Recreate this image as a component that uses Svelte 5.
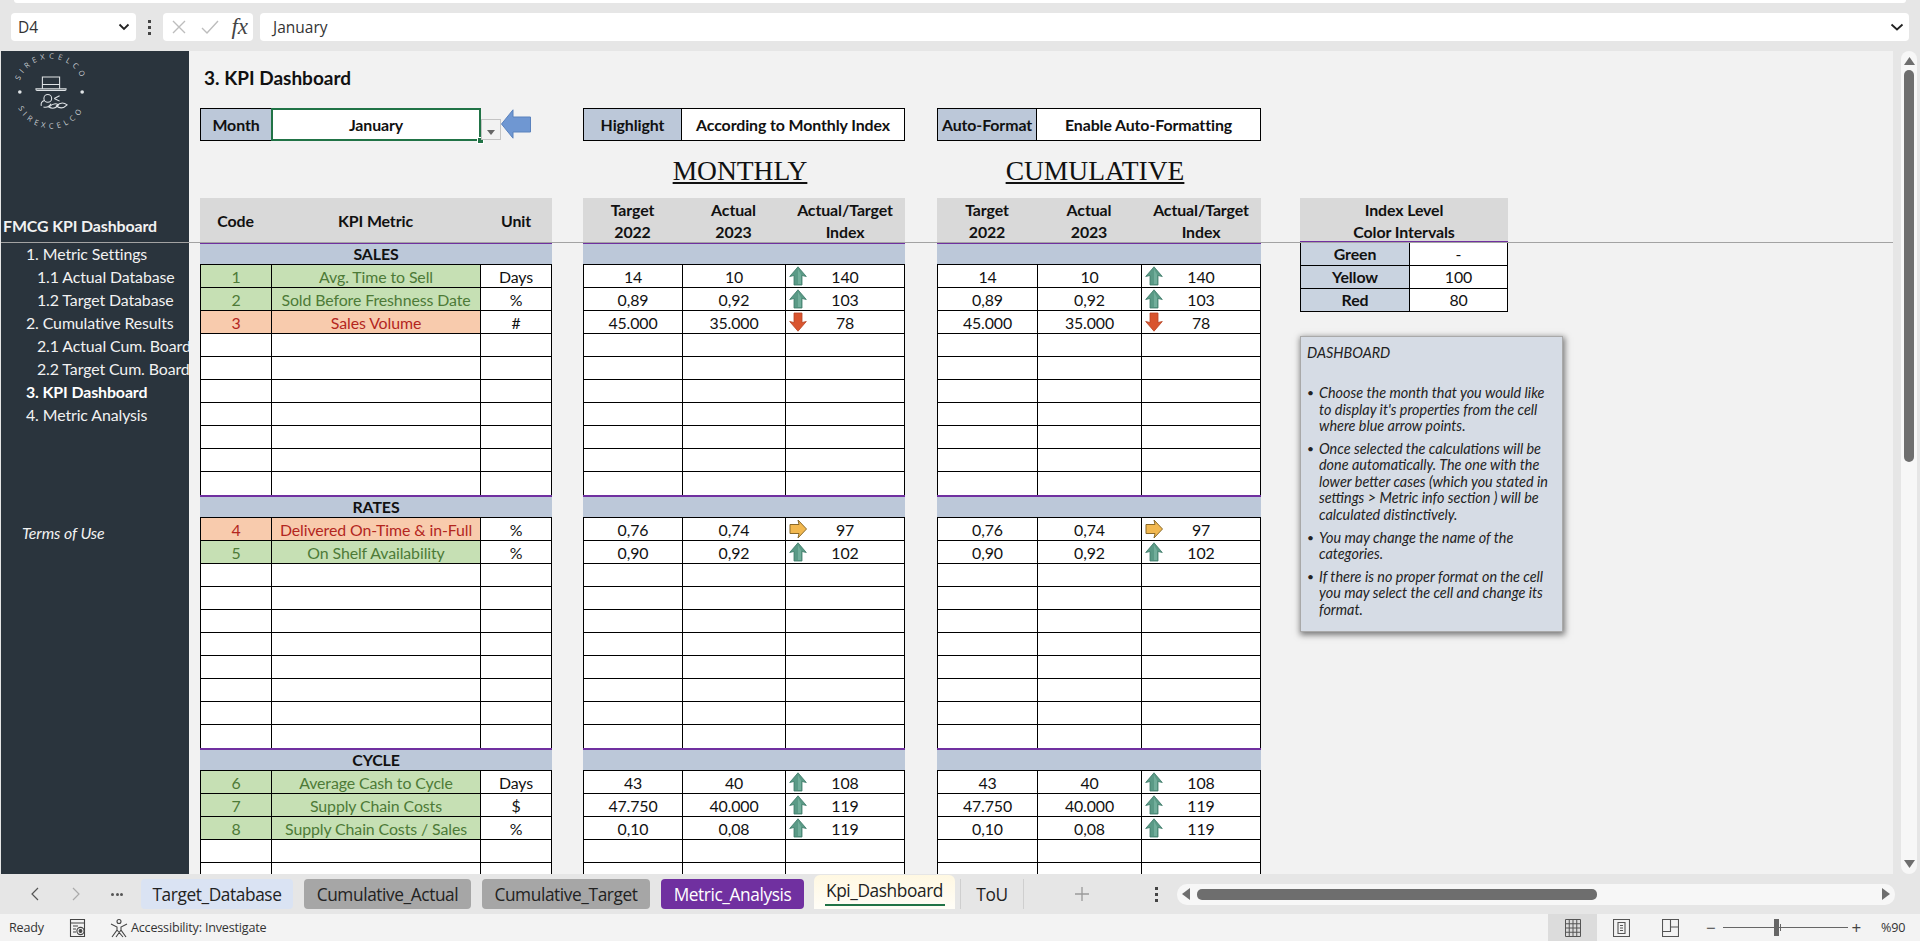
<script>
	const sections = [
		{
			name: 'SALES',
			rows: [
				{ code: 1, metric: 'Avg. Time to Sell', unit: 'Days', target: '14', actual: '10', dir: 'up', index: 140, tone: 'good' },
				{ code: 2, metric: 'Sold Before Freshness Date', unit: '%', target: '0,89', actual: '0,92', dir: 'up', index: 103, tone: 'good' },
				{ code: 3, metric: 'Sales Volume', unit: '#', target: '45.000', actual: '35.000', dir: 'down', index: 78, tone: 'bad' }
			]
		},
		{
			name: 'RATES',
			rows: [
				{ code: 4, metric: 'Delivered On-Time & in-Full', unit: '%', target: '0,76', actual: '0,74', dir: 'side', index: 97, tone: 'bad' },
				{ code: 5, metric: 'On Shelf Availability', unit: '%', target: '0,90', actual: '0,92', dir: 'up', index: 102, tone: 'good' }
			]
		},
		{
			name: 'CYCLE',
			rows: [
				{ code: 6, metric: 'Average Cash to Cycle', unit: 'Days', target: '43', actual: '40', dir: 'up', index: 108, tone: 'good' },
				{ code: 7, metric: 'Supply Chain Costs', unit: '$', target: '47.750', actual: '40.000', dir: 'up', index: 119, tone: 'good' },
				{ code: 8, metric: 'Supply Chain Costs / Sales', unit: '%', target: '0,10', actual: '0,08', dir: 'up', index: 119, tone: 'good' }
			]
		}
	];

	// every section is padded out to ten rows in the sheet
	const filled = sections.map((s) => ({
		name: s.name,
		rows: [...s.rows, ...new Array(10 - s.rows.length).fill(null)]
	}));

	const nav = [
		{ label: '1. Metric Settings', depth: 0 },
		{ label: '1.1 Actual Database', depth: 1 },
		{ label: '1.2 Target Database', depth: 1 },
		{ label: '2. Cumulative Results', depth: 0 },
		{ label: '2.1 Actual Cum. Board', depth: 1 },
		{ label: '2.2 Target Cum. Board', depth: 1 },
		{ label: '3. KPI Dashboard', depth: 0, active: true },
		{ label: '4. Metric Analysis', depth: 0 }
	];

	const tabs = [
		{ label: 'Target_Database', cls: 'blue' },
		{ label: 'Cumulative_Actual', cls: 'grey' },
		{ label: 'Cumulative_Target', cls: 'grey2' },
		{ label: 'Metric_Analysis', cls: 'purple' },
		{ label: 'Kpi_Dashboard', cls: 'current' },
		{ label: 'ToU', cls: 'plain' }
	];

	const notes = [
		["Choose the month that you would like", "to display it's properties from the cell", 'where blue arrow points.'],
		['Once selected the calculations will be', 'done automatically. The one with the', 'lower better cases (which you stated in', 'settings > Metric info section ) will be', 'calculated distinctively.'],
		['You may change the name of the', 'categories.'],
		['If there is no proper format on the cell', 'you may select the cell and change its', 'format.']
	];
</script>

{#snippet arrow(dir)}
	<svg class="arrow" viewBox="0 0 18 20" aria-hidden="true">
		{#if dir === 'up'}
			<path d="M9 .8 L17.3 10.5 L13 9.5 L13 19 L5 19 L5 9.5 L.7 10.5 Z" fill="#5a9a86" stroke="#3d7a68" stroke-width="0.8" />
			<path d="M9 3 L9 18 L12 18 L12 8.5 Z" fill="#72ae9b" />
		{:else if dir === 'down'}
			<path d="M5 1 L13 1 L13 10.5 L17.3 9.5 L9 19.2 L.7 9.5 L5 10.5 Z" fill="#d9552f" stroke="#b84526" stroke-width="0.8" />
		{:else}
			<path d="M1 5.5 L10 5.5 L9 1 L17.5 10 L9 19 L10 14.5 L1 14.5 Z" fill="#f2b84f" stroke="#8a6a2a" stroke-width="1" />
		{/if}
	</svg>
{/snippet}

{#snippet band(name, label)}
	<div class="band">{label ? name : ''}</div>
{/snippet}

<div class="excel">
	<div class="top">
		<div class="ribbon-edge"></div>
		<div class="formula-bar">
			<div class="namebox">
				<span>D4</span>
				<svg width="12" height="8" viewBox="0 0 12 8"><path d="M1.5 1.5 L6 6 L10.5 1.5" fill="none" stroke="#222" stroke-width="1.8" /></svg>
			</div>
			<div class="vdots"><i></i><i></i><i></i></div>
			<div class="fx-box">
				<svg width="18" height="18" viewBox="0 0 18 18"><path d="M3 3 L15 15 M15 3 L3 15" stroke="#bdbdbd" stroke-width="1.4" fill="none" /></svg>
				<svg width="20" height="18" viewBox="0 0 20 18"><path d="M2 10 L7 15 L18 3" stroke="#bdbdbd" stroke-width="1.4" fill="none" /></svg>
				<span class="fx">fx</span>
			</div>
			<div class="formula">
				<span>January</span>
				<svg width="14" height="8" viewBox="0 0 14 8"><path d="M1.5 1.5 L7 6.5 L12.5 1.5" fill="none" stroke="#222" stroke-width="1.8" /></svg>
			</div>
		</div>
	</div>

	<div class="middle">
		<div class="sheet">
			<aside class="side">
				<svg class="logo" viewBox="0 0 80 80" aria-hidden="true">
					<defs>
						<path id="arc-top" d="M9 40 A31 31 0 0 1 71 40" />
						<path id="arc-bottom" d="M6 40 A34 34 0 0 0 74 40" />
					</defs>
					<text class="logo-text"><textPath href="#arc-top" startOffset="50%" text-anchor="middle">SIREXCELCO</textPath></text>
					<text class="logo-text"><textPath href="#arc-bottom" startOffset="50%" text-anchor="middle">SIREXCELCO</textPath></text>
					<circle cx="11" cy="40" r="1.7" fill="#dfe3e6" />
					<circle cx="69" cy="40" r="1.7" fill="#dfe3e6" />
					<g fill="none" stroke="#dfe3e6" stroke-width="1">
						<path d="M26 37 h28 v0.5 a1 1 0 0 1 -1 1 h-26 a1 1 0 0 1 -1 -1 Z" />
						<path d="M32 37 V26 h16 V37 M32 33 h16" />
						<circle cx="37" cy="46" r="3.6" />
						<path d="M31 53 q-1 -4 3 -5 M33 54 q5 1 7 -3" />
						<path d="M43 46 l5 -2.5 M43 46 l5 2.5" />
						<path d="M38 54 q5 -5 9 -2 q-4 5 -9 2 Z M45 53 q5 -5 10 -1 q-5 5 -10 1 Z" />
					</g>
				</svg>
				<div class="brand">FMCG KPI Dashboard</div>
				<ul class="nav">
					{#each nav as item}
						<li class:sub={item.depth === 1} class:active={item.active}>{item.label}</li>
					{/each}
				</ul>
				<div class="terms">Terms of Use</div>
			</aside>

			<div class="board">
				<h1>3. KPI Dashboard</h1>

				<div class="blocks">
					<section class="block one">
						<div class="control">
							<span class="ctl-label month-label">Month</span>
							<span class="ctl-value month-value">January</span>
						</div>
						<span class="handle"></span>
						<span class="dropdown"><svg width="8" height="5" viewBox="0 0 8 5"><path d="M0 0 H8 L4 5 Z" fill="#666" /></svg></span>
						<svg class="pointer" viewBox="0 0 30 30" aria-hidden="true">
							<path d="M0.5 15 L12 0.8 V8 H29.5 V23 H12 V29.2 Z" fill="#6f97d2" stroke="#5a82bd" stroke-width="1" />
						</svg>
						<div class="gap-title"></div>
						<div class="head">
							<span>Code</span><span>KPI Metric</span><span>Unit</span>
						</div>
						{#each filled as s}
							{@render band(s.name, true)}
							<div class="rows">
								{#each s.rows as r}
									<div class="row">
										<span class={r ? r.tone : ''}>{r ? r.code : ''}</span>
										<span class={r ? r.tone : ''}>{r ? r.metric : ''}</span>
										<span>{r ? r.unit : ''}</span>
									</div>
								{/each}
							</div>
						{/each}
					</section>

					<section class="block two">
						<div class="control">
							<span class="ctl-label">Highlight</span>
							<span class="ctl-value">According to Monthly Index</span>
						</div>
						<div class="gap-title"><u>MONTHLY</u></div>
						<div class="head">
							<span>Target<br />2022</span><span>Actual<br />2023</span><span>Actual/Target<br />Index</span>
						</div>
						{#each filled as s}
							{@render band(s.name, false)}
							<div class="rows">
								{#each s.rows as r}
									<div class="row">
										<span>{r ? r.target : ''}</span>
										<span>{r ? r.actual : ''}</span>
										<span class="idx">{#if r}{@render arrow(r.dir)}{r.index}{/if}</span>
									</div>
								{/each}
							</div>
						{/each}
					</section>

					<section class="block three">
						<div class="control">
							<span class="ctl-label">Auto-Format</span>
							<span class="ctl-value">Enable Auto-Formatting</span>
						</div>
						<div class="gap-title"><u>CUMULATIVE</u></div>
						<div class="head">
							<span>Target<br />2022</span><span>Actual<br />2023</span><span>Actual/Target<br />Index</span>
						</div>
						{#each filled as s}
							{@render band(s.name, false)}
							<div class="rows">
								{#each s.rows as r}
									<div class="row">
										<span>{r ? r.target : ''}</span>
										<span>{r ? r.actual : ''}</span>
										<span class="idx">{#if r}{@render arrow(r.dir)}{r.index}{/if}</span>
									</div>
								{/each}
							</div>
						{/each}
					</section>

					<section class="block four">
						<div class="spacer"></div>
						<div class="head single">
							<span>Index Level<br />Color Intervals</span>
						</div>
						<div class="levels">
							<div class="level"><b>Green</b><span>-</span></div>
							<div class="level"><b>Yellow</b><span>100</span></div>
							<div class="level"><b>Red</b><span>80</span></div>
						</div>
						<div class="note">
							<div class="note-title">DASHBOARD</div>
							{#each notes as lines}
								<div class="note-item">
									<span class="dot">•</span>
									<p>{#each lines as line, i}{#if i > 0}<br />{/if}{line}{/each}</p>
								</div>
							{/each}
						</div>
					</section>
				</div>
			</div>
			<div class="freeze"></div>
		</div>

		<div class="vscroll">
			<svg width="11" height="8" viewBox="0 0 11 8"><path d="M5.5 0 L11 8 H0 Z" fill="#6e6e6e" /></svg>
			<div class="vthumb"></div>
			<div class="fill"></div>
			<svg width="11" height="8" viewBox="0 0 11 8"><path d="M5.5 8 L11 0 H0 Z" fill="#6e6e6e" /></svg>
		</div>
	</div>

	<div class="tabbar">
		<div class="tab-nav">
			<svg width="10" height="16" viewBox="0 0 10 16"><path d="M8 2 L2 8 L8 14" fill="none" stroke="#555" stroke-width="1.2" /></svg>
			<svg width="10" height="16" viewBox="0 0 10 16"><path d="M2 2 L8 8 L2 14" fill="none" stroke="#aaa" stroke-width="1.2" /></svg>
			<span class="more"><i></i><i></i><i></i></span>
		</div>
		<div class="tabs">
			{#each tabs as t}
				<div class="tab {t.cls}">{t.label}</div>
			{/each}
		</div>
		<svg class="plus" width="16" height="16" viewBox="0 0 16 16"><path d="M8 1 V15 M1 8 H15" stroke="#9a9a9a" stroke-width="1.3" /></svg>
		<div class="vdots tabdots"><i></i><i></i><i></i></div>
		<div class="hscroll">
			<svg width="8" height="12" viewBox="0 0 8 12"><path d="M0 6 L8 0 V12 Z" fill="#6e6e6e" /></svg>
			<div class="hthumb"></div>
			<div class="fill"></div>
			<svg width="8" height="12" viewBox="0 0 8 12"><path d="M8 6 L0 0 V12 Z" fill="#6e6e6e" /></svg>
		</div>
	</div>

	<footer class="status">
		<span class="ready">Ready</span>
		<svg class="macro" width="18" height="20" viewBox="0 0 18 20" fill="none" stroke="#444" stroke-width="1.1">
			<path d="M1.5 1.5 H15.5 V18.5 H1.5 Z M1.5 5 H15.5 M4 8 H9 M4 11 H7 M4 14 H7" />
			<circle cx="11.5" cy="13" r="3.6" fill="#f3f3f3" />
			<circle cx="11.5" cy="13" r="1.4" fill="#444" />
		</svg>
		<svg class="access" width="20" height="20" viewBox="0 0 20 20" fill="none" stroke="#444" stroke-width="1.1">
			<circle cx="10" cy="3.5" r="2" />
			<path d="M2 6 L8 9 V12 L3 19 M18 6 L12 9 V12 L17 19 M8 12 L14 19 M12 12 L7 19" />
		</svg>
		<span class="investigate">Accessibility: Investigate</span>
		<div class="fill"></div>
		<div class="view on">
			<svg width="16" height="18" viewBox="0 0 16 18" fill="none" stroke="#555" stroke-width="1"><path d="M.5.5H15.5V17.5H.5ZM.5 4.75H15.5M.5 9H15.5M.5 13.25H15.5M4.25.5V17.5M8 .5V17.5M11.75.5V17.5" /></svg>
		</div>
		<div class="view">
			<svg width="17" height="18" viewBox="0 0 17 18" fill="none" stroke="#555" stroke-width="1.1"><path d="M.5.5H16.5V17.5H.5ZM5 3.5H12V14.5H5ZM7 6.5H10M7 9H10M7 11.5H10" /></svg>
		</div>
		<div class="view">
			<svg width="17" height="18" viewBox="0 0 17 18" fill="none" stroke="#555" stroke-width="1.1"><path d="M.5.5H16.5V17.5H.5ZM.5 12.5H8.5V.5M8.5 8H16.5" /></svg>
		</div>
		<div class="zoom">
			<span class="zoom-sign minus">−</span>
			<div class="slider"><i></i><b></b></div>
			<span class="zoom-sign">+</span>
		</div>
		<span class="pct">%90</span>
	</footer>
</div>

<style>
	:global(body) {
		margin: 0;
		background: #e6e6e6;
	}

	.excel {
		display: flex;
		flex-direction: column;
		height: 941px;
		width: 1920px;
		overflow: hidden;
		font-family: Lato, 'Liberation Sans', sans-serif;
		color: #111;
	}

	.fill {
		flex: 1;
	}

	/* formula bar */
	.top {
		height: 51px;
		flex: none;
		background: #e6e6e6;
	}

	.ribbon-edge {
		height: 3px;
		margin: 0 14px;
		background: #fff;
		border-radius: 0 0 6px 6px;
	}

	.formula-bar {
		display: flex;
		align-items: center;
		height: 28px;
		margin: 10px 11px 0 11px;
		font-family: 'Open Sans', sans-serif;
		font-size: 15.5px;
		color: #333;
	}

	.namebox,
	.fx-box,
	.formula {
		display: flex;
		align-items: center;
		height: 100%;
		background: #fff;
		border-radius: 4px;
		box-sizing: border-box;
	}

	.namebox {
		width: 125px;
		padding: 0 6px 0 7px;
		justify-content: space-between;
	}

	.vdots {
		display: flex;
		flex-direction: column;
		gap: 3px;
		width: 27px;
		align-items: center;
	}

	.vdots i {
		width: 3px;
		height: 3px;
		background: #444;
	}

	.fx-box {
		width: 90px;
		padding: 0 5px 0 7px;
		justify-content: space-between;
	}

	.fx {
		font-family: 'Liberation Serif', serif;
		font-style: italic;
		font-size: 23px;
		color: #444;
	}

	.formula {
		flex: 1;
		margin-left: 7px;
		padding: 0 5px 0 13px;
		justify-content: space-between;
	}

	/* sheet */
	.middle {
		display: flex;
		height: 823px;
		flex: none;
	}

	.sheet {
		position: relative;
		display: flex;
		width: 1892px;
		margin-left: 1px;
		background: #f2f2f2;
		overflow: hidden;
		font-size: 15.9px;
		letter-spacing: -0.1px;
	}

	.side {
		position: relative;
		width: 188px;
		flex: none;
		background: #2a343d;
		color: #f2f2f2;
		overflow: hidden;
		white-space: nowrap;
	}

	.logo {
		display: block;
		width: 86px;
		height: 86px;
		margin: -2px 0 0 7px;
	}

	.logo-text {
		font-size: 7px;
		letter-spacing: 3.6px;
		fill: #c9ced2;
		font-family: 'Open Sans', sans-serif;
	}

	.brand {
		height: 44px;
		margin-top: 63px;
		box-sizing: border-box;
		padding: 18px 0 0 2px;
		font-weight: 700;
	}

	.nav {
		list-style: none;
		margin: 0;
		padding: 0;
		height: 279px;
	}

	.nav li {
		height: 23px;
		line-height: 23px;
		padding-left: 25px;
	}

	.nav li.sub {
		padding-left: 36px;
	}

	.nav li.active {
		font-weight: 700;
		color: #fff;
	}

	.terms {
		height: 23px;
		line-height: 23px;
		padding-left: 21px;
		font-style: italic;
	}

	.board {
		flex: 1;
		padding-left: 11px;
	}

	h1 {
		height: 57px;
		margin: 0;
		padding: 14px 0 0 4px;
		box-sizing: border-box;
		font-size: 19px;
		line-height: 26px;
		font-weight: 700;
		letter-spacing: 0;
	}

	.blocks {
		display: flex;
	}

	.block {
		position: relative;
		flex: none;
	}

	.one {
		width: 352px;
		--cols: 71px 209px 72px;
		margin-right: 31px;
	}

	.two {
		width: 322px;
		--cols: 99px 103px 120px;
		margin-right: 32px;
	}

	.three {
		width: 324px;
		--cols: 100px 104px 120px;
		margin-right: 39px;
	}

	.four {
		width: 208px;
	}

	.control {
		display: grid;
		height: 33px;
		box-sizing: border-box;
		border: 1px solid #000;
		font-weight: 700;
	}

	.two .control {
		grid-template-columns: 98px 1fr;
	}

	.three .control {
		grid-template-columns: 99px 1fr;
	}

	.one .control {
		grid-template-columns: 70px 210px;
		width: 280px;
		border-right: 0;
	}

	.ctl-label,
	.ctl-value {
		display: flex;
		align-items: center;
		justify-content: center;
		white-space: nowrap;
	}

	.ctl-label {
		background: #bcc8d9;
		border-right: 1px solid #000;
	}

	.ctl-value {
		background: #fff;
	}

	.month-label {
		border-right: 0;
	}

	.month-value {
		margin: -1px 0;
		padding-bottom: 1px;
		border: 2px solid #217346;
	}

	.handle {
		position: absolute;
		left: 278px;
		top: 30px;
		width: 5px;
		height: 5px;
		background: #217346;
		border: 1px solid #fff;
		box-sizing: content-box;
		margin: -1px;
	}

	.dropdown {
		position: absolute;
		left: 281px;
		top: 11px;
		width: 20px;
		height: 21px;
		box-sizing: border-box;
		display: flex;
		align-items: center;
		justify-content: center;
		border: 1px solid #c4c4c4;
		background: #f2f2f2;
		padding-top: 6px;
	}

	.pointer {
		position: absolute;
		left: 301px;
		top: 1px;
		width: 30px;
		height: 30px;
	}

	.gap-title {
		height: 57px;
		padding: 10px 8px 0 0;
		box-sizing: border-box;
		text-align: center;
		font-family: 'Liberation Serif', serif;
		font-size: 27.5px;
		line-height: 40px;
		letter-spacing: 0;
	}

	.spacer {
		height: 90px;
	}

	.head {
		display: grid;
		grid-template-columns: var(--cols);
		height: 44px;
		box-sizing: border-box;
		padding-top: 1px;
		background: #d9d9d9;
		font-weight: 700;
		line-height: 21.5px;
		text-align: center;
	}

	.head.single {
		grid-template-columns: 1fr;
	}

	.head span {
		display: flex;
		align-items: center;
		justify-content: center;
	}

	.band {
		height: 23px;
		box-sizing: border-box;
		border-top: 2px solid #7030a0;
		background: #bcc8d9;
		text-align: center;
		font-weight: 700;
		line-height: 19px;
	}

	.rows {
		margin-top: -1px;
		border-top: 1px solid #000;
		border-left: 1px solid #000;
		box-sizing: border-box;
	}

	.row {
		display: grid;
		grid-template-columns: var(--cols);
		height: 23px;
		margin-left: -1px;
		background: #fff;
		text-align: center;
	}

	.row span {
		display: flex;
		align-items: center;
		justify-content: center;
		position: relative;
		box-sizing: border-box;
		border-left: 1px solid #000;
		border-bottom: 1px solid #000;
		white-space: nowrap;
	}

	.row:last-child span {
		border-bottom: 0;
	}

	.row span:last-child {
		border-right: 1px solid #000;
	}

	.row .good {
		background: #c6e0b4;
		color: #4d7a37;
	}

	.row .bad {
		background: #f8cbad;
		color: #b3261e;
	}

	.arrow {
		position: absolute;
		left: 3px;
		top: 1px;
		width: 18px;
		height: 20px;
	}

	.levels {
		border-top: 2px solid #7030a0;
		margin-top: -1px;
	}

	.level {
		display: grid;
		grid-template-columns: 109px 1fr;
		height: 23px;
		box-sizing: border-box;
		border: 1px solid #000;
		border-top: 0;
		text-align: center;
		line-height: 22px;
	}

	.level b {
		background: #c9d3e0;
		border-right: 1px solid #000;
	}

	.level span {
		background: #fff;
	}

	.note {
		width: 263px;
		height: 296px;
		margin-top: 24px;
		box-sizing: border-box;
		padding: 8px 6px;
		background: #d6dce5;
		border: 1px solid #a9a9a9;
		box-shadow: 1px 2px 6px 1px rgba(0, 0, 0, 0.5);
		font-size: 14.4px;
		font-style: italic;
		line-height: 16.5px;
		letter-spacing: 0;
		color: #222;
		white-space: nowrap;
	}

	.note-title {
		height: 33px;
		margin-bottom: 7px;
	}

	.note-item {
		display: flex;
		margin-bottom: 6.3px;
	}

	.dot {
		width: 12px;
		font-style: normal;
		font-size: 12px;
	}

	.note p {
		margin: 0;
	}

	.freeze {
		position: absolute;
		left: 0;
		right: 0;
		top: 191px;
		height: 1px;
		background: #a3a3a3;
	}

	.vscroll {
		display: flex;
		flex-direction: column;
		align-items: center;
		width: 16px;
		margin: 0 0 0 8px;
		padding: 6px 0;
		box-sizing: border-box;
		background: #f7f7f7;
		border-radius: 8px;
		gap: 5px;
	}

	.vthumb {
		width: 10px;
		height: 392px;
		background: #6e6e6e;
		border-radius: 5px;
	}

	/* sheet tabs */
	.tabbar {
		display: flex;
		align-items: center;
		height: 40px;
		flex: none;
		background: #e6e6e6;
		font-family: 'Open Sans', sans-serif;
		font-size: 17.3px;
		letter-spacing: -0.4px;
	}

	.tab-nav {
		display: flex;
		align-items: center;
		width: 141px;
		box-sizing: border-box;
		padding-left: 30px;
		gap: 31px;
		flex: none;
	}

	.more {
		display: flex;
		gap: 1.5px;
		margin-left: -1px;
	}

	.more i {
		width: 3px;
		height: 3px;
		border-radius: 50%;
		background: #555;
	}

	.tabs {
		display: flex;
		gap: 11px;
		width: 883px;
		flex: none;
	}

	.tab {
		display: flex;
		align-items: center;
		justify-content: center;
		height: 30px;
		border-radius: 4px;
		box-sizing: border-box;
		color: #222;
		white-space: nowrap;
	}

	.blue {
		width: 152px;
		background: #dae3f3;
	}

	.grey {
		width: 167px;
		background: #a6a6a6;
	}

	.grey2 {
		width: 168px;
		background: #a6a6a6;
	}

	.purple {
		width: 143px;
		background: #7030a0;
		color: #fff;
	}

	.current {
		position: relative;
		width: 141px;
		height: 34px;
		margin: -4px 0 0 -1px;
		padding-bottom: 3px;
		background: linear-gradient(#fff8e2, #fffdf7);
		border-radius: 6px 6px 0 0;
	}

	.current::after {
		content: '';
		position: absolute;
		left: 11px;
		right: 10px;
		bottom: 3px;
		height: 2px;
		background: #217346;
	}

	.plain {
		width: 64px;
		margin-left: -6px;
		border-left: 1px solid #cfcfcf;
		border-right: 1px solid #cfcfcf;
		border-radius: 0;
	}

	.plus {
		margin-left: 50px;
	}

	.tabdots {
		width: 16px;
		margin-left: 58px;
	}

	.hscroll {
		display: flex;
		align-items: center;
		width: 718px;
		height: 21px;
		margin-left: 13px;
		padding: 0 5px;
		box-sizing: border-box;
		background: #f7f7f7;
		border-radius: 10px;
		gap: 7px;
	}

	.hthumb {
		width: 400px;
		height: 11px;
		background: #6e6e6e;
		border-radius: 5px;
	}

	/* status bar */
	.status {
		display: flex;
		align-items: center;
		height: 27px;
		flex: none;
		background: #f3f3f3;
		font-family: 'Open Sans', sans-serif;
		font-size: 12.6px;
		letter-spacing: -0.2px;
		color: #333;
	}

	.ready {
		margin-left: 9px;
		width: 60px;
	}

	.macro {
		margin-right: 22px;
	}

	.access {
		margin-right: 2px;
	}

	.view {
		display: flex;
		align-items: center;
		justify-content: center;
		width: 49px;
		height: 100%;
	}

	.view.on {
		background: #dcdcdc;
	}

	.zoom {
		display: flex;
		align-items: center;
		margin-left: 14px;
		gap: 4px;
		width: 155px;
	}

	.zoom-sign {
		font-size: 17px;
		color: #444;
	}

	.zoom-sign.minus {
		margin-left: -3px;
		margin-right: 3px;
	}

	.slider {
		position: relative;
		width: 125px;
		height: 1px;
		background: #666;
	}

	.slider i {
		position: absolute;
		left: 51px;
		top: -8px;
		width: 5px;
		height: 17px;
		background: #666;
	}

	.slider b {
		position: absolute;
		left: 57px;
		top: -3px;
		width: 1px;
		height: 7px;
		background: #666;
	}

	.pct {
		width: 56px;
		padding-left: 17px;
		box-sizing: border-box;
	}
</style>
